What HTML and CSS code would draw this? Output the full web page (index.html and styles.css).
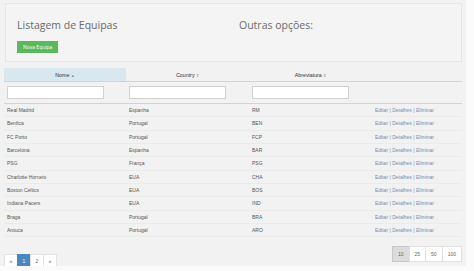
FILE: index.html
```html
<!DOCTYPE html>
<html lang="pt">
<head>
  <meta charset="UTF-8">
  <title>Listagem de Equipas</title>
  <link rel="stylesheet" href="styles.css">
</head>
<body>
  <div class="pagina">
    <div class="topo">
      <div class="coluna">
        <h1>Listagem de Equipas</h1>
        <a class="btn-nova" href="#">Nova Equipa</a>
      </div>
      <div class="coluna">
        <h1>Outras opções:</h1>
      </div>
    </div>

    <table class="tabela">
      <thead>
        <tr class="cabecalho">
          <th class="ordenado">Nome <span class="seta">&#9650;</span></th>
          <th>Country <span class="seta">&#8661;</span></th>
          <th>Abreviatura <span class="seta">&#8661;</span></th>
          <th></th>
        </tr>
        <tr class="filtros">
          <th><input type="text"></th>
          <th><input type="text"></th>
          <th><input type="text"></th>
          <th></th>
        </tr>
      </thead>
      <tbody id="linhas"></tbody>
    </table>

    <div class="rodape">
      <ul class="paginacao">
        <li>&laquo;</li>
        <li class="ativo">1</li>
        <li>2</li>
        <li>&raquo;</li>
      </ul>
      <ul class="tamanhos">
        <li class="ativo">10</li>
        <li>25</li>
        <li>50</li>
        <li>100</li>
      </ul>
    </div>
  </div>

  <script>
    const equipas = [
      ['Real Madrid', 'Espanha', 'RM'],
      ['Benfica', 'Portugal', 'BEN'],
      ['FC Porto', 'Portugal', 'FCP'],
      ['Barcelona', 'Espanha', 'BAR'],
      ['PSG', 'França', 'PSG'],
      ['Charlotte Hornets', 'EUA', 'CHA'],
      ['Boston Celtics', 'EUA', 'BOS'],
      ['Indiana Pacers', 'EUA', 'IND'],
      ['Braga', 'Portugal', 'BRA'],
      ['Arouca', 'Portugal', 'ARO']
    ];

    const corpo = document.getElementById('linhas');
    equipas.forEach(e => {
      const tr = document.createElement('tr');
      tr.innerHTML = '<td>' + e[0] + '</td><td>' + e[1] + '</td><td>' + e[2] + '</td>' +
        '<td class="acoes"><a href="#">Editar</a> | <a href="#">Detalhes</a> | <a href="#">Eliminar</a></td>';
      corpo.appendChild(tr);
    });
  </script>
</body>
</html>
```

FILE: styles.css
```css
body {
  margin: 0;
  background: #fbfbfb;
  font-family: 'Liberation Sans', Arial, sans-serif;
}

.pagina {
  width: 466px;
  height: 266px;
  background: #f2f2f2;
  padding: 3px 4px 0 4px;
  box-sizing: border-box;
}

.topo {
  display: flex;
  margin-left: 1px;
  width: 457px;
  height: 59px;
  box-sizing: border-box;
  border: 1px solid #e6e6e6;
  background: #f4f4f4;
  padding: 14px 12px 0 11px;
}

.coluna {
  width: 222px;
  flex-shrink: 0;
}

.topo h1 {
  margin: 0;
  font-family: 'Open Sans', sans-serif;
  font-weight: normal;
  font-size: 10.5px;
  color: #6a6a6a;
  line-height: 14px;
}

.btn-nova {
  display: inline-block;
  margin-top: 9px;
  background: #5cb85c;
  color: #fff;
  font-family: 'Open Sans', sans-serif;
  font-size: 5px;
  line-height: 12px;
  padding: 0 6px;
  text-decoration: none;
}

.tabela {
  margin-top: 6px;
  width: 458px;
  border-collapse: collapse;
  font-size: 5px;
  color: #555;
}

.tabela th:nth-child(1) { width: 122px; }
.tabela th:nth-child(2) { width: 123px; }
.tabela th:nth-child(3) { width: 123px; }

.cabecalho th {
  height: 13px;
  padding: 0;
  font-weight: normal;
  font-size: 5.3px;
  color: #333;
  border-bottom: 1px solid #c9d6df;
}

.cabecalho th.ordenado {
  background: #d9e7ef;
}

.seta {
  color: #888;
  font-size: 4px;
}

.filtros th {
  height: 21px;
  padding: 0;
  text-align: left;
  border-bottom: 1px solid #c9d6df;
}

.filtros input {
  display: block;
  margin-left: 3px;
  width: 97px;
  height: 13px;
  box-sizing: border-box;
  border: 1px solid #d0d0d0;
  background: #fff;
  padding: 0;
}

.tabela td {
  height: 12.33px;
  padding: 0 0 0 3px;
  border-bottom: 1px solid #ebebeb;
}

.acoes a {
  color: #6f8fb3;
  text-decoration: none;
}

.acoes {
  color: #6f8fb3;
}

.rodape {
  display: flex;
  justify-content: space-between;
  width: 458px;
  margin-top: 9px;
}

.rodape ul {
  display: flex;
  margin: 0;
  padding: 0;
  list-style: none;
  font-size: 5px;
  color: #666;
}

.paginacao {
  align-self: flex-end;
  margin-top: 8px !important;
  margin-left: 1px !important;
}

.paginacao li {
  width: 12px;
  height: 13px;
  line-height: 13px;
  text-align: center;
  background: #fff;
  border: 1px solid #e2e2e2;
  margin-left: -1px;
}

.paginacao li.ativo {
  background: #4a86c0;
  color: #fff;
  border-color: #4a86c0;
}

.tamanhos li {
  height: 14px;
  line-height: 14px;
  padding: 0 5px;
  background: #fff;
  border: 1px solid #e0e0e0;
  margin-left: -1px;
}

.tamanhos li.ativo {
  background: #dcdcdc;
  border-color: #c8c8c8;
}
```
